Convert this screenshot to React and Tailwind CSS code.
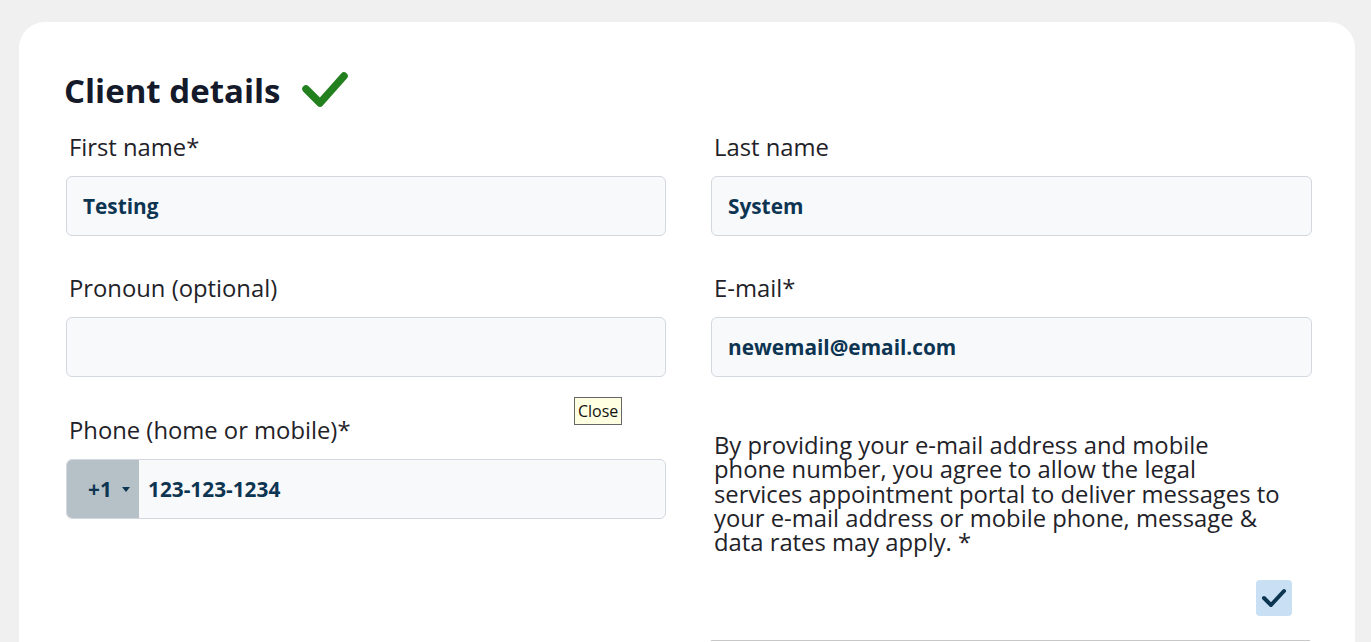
import React from "react";

function Label({ children }) {
  return (
    <div className="px-[3px] text-[23.8px] leading-[30px] text-[#1f2329]">{children}</div>
  );
}

function Input({ value }) {
  return (
    <div className="mt-[14px] flex h-[60px] items-center rounded-[6px] border border-[#d3d7de] bg-[#f8f9fb] px-4 pt-[2px] text-[20.8px] font-bold text-[#0d3552]">
      {value}
    </div>
  );
}

export default function App() {
  return (
    <div
      className="min-h-[642px] bg-[#f0f0f0] pl-[19px] pr-[16px] pt-[22px]"
      style={{ fontFamily: '"Open Sans", "Noto Sans", sans-serif' }}
    >
      <div className="relative h-[660px] rounded-t-[26px] bg-white pl-[47px] pr-[43px] pt-[49px]">
        <div className="flex items-center">
          <h1 className="-ml-[2px] text-[33px] font-bold leading-[40px] text-[#141a2a]">Client details</h1>
          <svg className="ml-[21px] -mt-[2px]" width="48" height="40" viewBox="0 0 48 40">
            <path d="M5 19 L19 33 L43 6" fill="none" stroke="#23801f" strokeWidth="7.5" strokeLinecap="round" strokeLinejoin="round" />
          </svg>
        </div>

        <div className="mt-[21px] grid grid-cols-[600px_601px] gap-x-[45px] gap-y-[37px]">
          <div>
            <Label>First name*</Label>
            <Input value="Testing" />
          </div>
          <div>
            <Label>Last name</Label>
            <Input value="System" />
          </div>
          <div>
            <Label>Pronoun (optional)</Label>
            <Input value="" />
          </div>
          <div>
            <Label>E-mail*</Label>
            <Input value="newemail@email.com" />
          </div>
          <div className="pt-[1px]">
            <Label>Phone (home or mobile)*</Label>
            <div className="mt-[14px] flex h-[60px] overflow-hidden rounded-[6px] border border-[#d3d7de] bg-[#f8f9fb]">
              <div className="flex w-[72px] items-center bg-[#b6c1c7] pl-[21px] pt-[2px] text-[20.8px] font-bold text-[#0d3552]">
                +1
                <svg className="ml-[10px]" width="8" height="6" viewBox="0 0 8 6">
                  <path d="M0 0 L8 0 L4 5 Z" fill="#0d3552" />
                </svg>
              </div>
              <div className="flex items-center pl-[9px] pt-[2px] text-[20.8px] font-bold text-[#0d3552]">123-123-1234</div>
            </div>
          </div>
          <div className="pt-[1px]">
            <p className="mt-[18px] px-[3px] text-[23.8px] leading-[24.3px] text-[#1f2329]">
              <span className="whitespace-nowrap">By providing your e-mail address and mobile</span>
              <br />
              <span className="whitespace-nowrap">phone number, you agree to allow the legal</span>
              <br />
              <span className="whitespace-nowrap">services appointment portal to deliver messages to</span>
              <br />
              <span className="whitespace-nowrap">your e-mail address or mobile phone, message &amp;</span>
              <br />
              <span className="whitespace-nowrap">data rates may apply. *</span>
            </p>
            <div className="mt-[26px] flex justify-end pr-[20px]">
              <div className="flex h-[36px] w-[36px] items-center justify-center rounded-[4px] bg-[#c9e0f4]">
                <svg width="26" height="22" viewBox="0 0 26 22">
                  <path d="M3 11 L10 18 L23 4" fill="none" stroke="#0c3552" strokeWidth="4" strokeLinecap="round" strokeLinejoin="round" />
                </svg>
              </div>
            </div>
            <div className="mt-[24px] mr-[2px] border-t border-[#c8c8c8]"></div>
          </div>
        </div>

        <div className="absolute left-[555px] top-[375px] border border-[#666] bg-[#ffffe1] px-[3px] text-[16px] leading-[26px] text-[#111]">
          Close
        </div>
      </div>
    </div>
  );
}
